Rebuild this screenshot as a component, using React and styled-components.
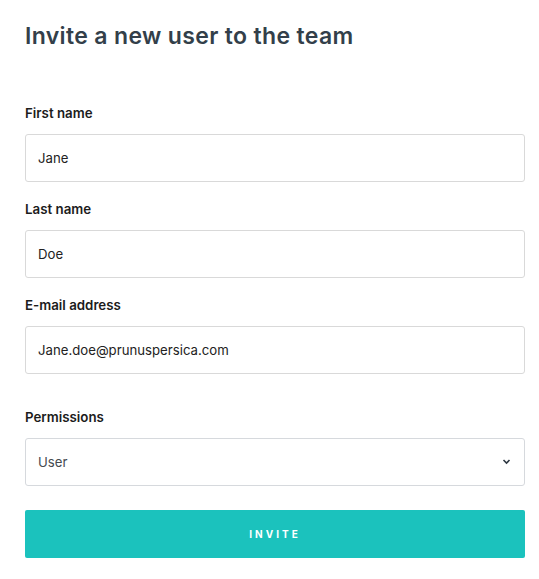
import React, { useState } from 'react'
import styled, { createGlobalStyle } from 'styled-components'

const GlobalStyle = createGlobalStyle`
  body {
    margin: 0;
    background: #fff;
    font-family: 'Inter', 'Noto Sans', sans-serif;
  }
`

const Page = styled.div`
  width: 539px;
  box-sizing: border-box;
  padding: 21px 14px 0 25px;
`

const Title = styled.h1`
  margin: 0 0 53px;
  font-size: 23px;
  line-height: 30px;
  font-weight: 600;
  color: #333f4a;
  letter-spacing: 0.35px;
`

const Form = styled.form`
  display: flex;
  flex-direction: column;
`

const Field = styled.div`
  display: flex;
  flex-direction: column;
  margin-bottom: ${(props) => props.gap || 18}px;
`

const Label = styled.label`
  font-size: 13.3px;
  line-height: 18px;
  font-weight: 600;
  color: #1c1c1c;
  margin-bottom: 12px;
`

const Input = styled.input`
  height: 48px;
  box-sizing: border-box;
  border: 1px solid #d9d9d9;
  border-radius: 3px;
  padding: 0 12px;
  font-family: inherit;
  font-size: 13.2px;
  color: #222;
  outline: none;
`

const SelectWrap = styled.div`
  position: relative;
  height: 48px;
`

const Select = styled.select`
  appearance: none;
  width: 100%;
  height: 48px;
  box-sizing: border-box;
  border: 1px solid #d6d9dd;
  border-radius: 3px;
  padding: 0 12px;
  background: #fff;
  font-family: inherit;
  font-size: 13.2px;
  color: #454a50;
  outline: none;
`

const Chevron = styled.svg`
  position: absolute;
  right: 14px;
  top: 20px;
  pointer-events: none;
`

const Button = styled.button`
  height: 48px;
  border: none;
  border-radius: 2px;
  background: #1bc2bd;
  color: #fff;
  font-family: inherit;
  font-size: 10px;
  font-weight: 700;
  letter-spacing: 3px;
  text-transform: uppercase;
  cursor: pointer;
`

const App = () => {
  const [form, setForm] = useState({
    firstName: 'Jane',
    lastName: 'Doe',
    email: 'Jane.doe@prunuspersica.com',
    permissions: 'user'
  })

  const update = (key) => (e) => setForm({ ...form, [key]: e.target.value })

  return (
    <Page>
      <GlobalStyle />
      <Title>Invite a new user to the team</Title>
      <Form onSubmit={(e) => e.preventDefault()}>
        <Field>
          <Label>First name</Label>
          <Input value={form.firstName} onChange={update('firstName')} />
        </Field>
        <Field>
          <Label>Last name</Label>
          <Input value={form.lastName} onChange={update('lastName')} />
        </Field>
        <Field gap={34}>
          <Label>E-mail address</Label>
          <Input value={form.email} onChange={update('email')} />
        </Field>
        <Field gap={24}>
          <Label>Permissions</Label>
          <SelectWrap>
            <Select value={form.permissions} onChange={update('permissions')}>
              <option value='user'>User</option>
              <option value='admin'>Admin</option>
            </Select>
            <Chevron width='9' height='7' viewBox='0 0 9 7'>
              <path d='M1.5 2 L4.5 5 L7.5 2' fill='none' stroke='#2e3842' strokeWidth='1.6' />
            </Chevron>
          </SelectWrap>
        </Field>
        <Button type='submit'>Invite</Button>
      </Form>
    </Page>
  )
}

export default App
